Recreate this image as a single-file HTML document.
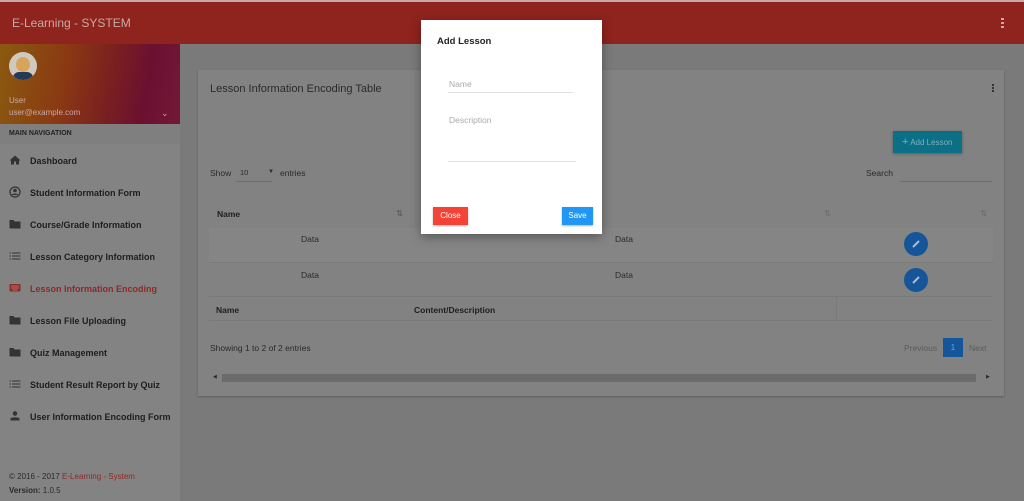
<!DOCTYPE html>
<html><head><meta charset="utf-8"><style>
*{margin:0;padding:0;box-sizing:border-box}
body{width:1024px;height:501px;overflow:hidden;background:#7a7a7a;font-family:"Liberation Sans",Arial,sans-serif;position:relative}
.a{position:absolute}
.hdr{left:0;top:0;width:1024px;height:44px;background:#8f231d;border-top:2px solid #c9a9a7}
.side{left:0;top:44px;width:180px;height:457px;background:#838383}
.nav{left:0;width:180px;font-size:9px;font-weight:bold;color:#1e1e1e}
.nav span{position:absolute;left:30px;top:0;white-space:nowrap}
.ic{position:absolute;left:9px;top:-1px;width:12px;height:10px}
.card{left:198px;top:70px;width:806px;height:326px;background:#828282;box-shadow:0 1px 2px rgba(0,0,0,.25)}
.t{font-size:8.5px;color:#2a2a2a}
.b{font-weight:bold;color:#1e1e1e}
.fab{width:24px;height:24px;border-radius:50%;background:#15559a}
</style></head><body>
<div class="a hdr"></div>
<div class="a" style="left:12px;top:16px;color:#c8a9a5;font-size:12px">E-Learning - SYSTEM</div>
<div class="a" style="left:1001px;top:18px;width:3px;height:10px;background:repeating-linear-gradient(#c8a9a5 0 2px,transparent 2px 4px)"></div>

<div class="a side"></div>
<div class="a" style="left:0;top:44px;width:180px;height:80px;background:linear-gradient(100deg,#8a5a10 0%,#8a3a12 35%,#7a2020 60%,#6a1030 80%,#751838 100%)"></div>
<div class="a" style="left:9px;top:52px;width:28px;height:28px;border-radius:50%;background:#cfc9c0;overflow:hidden"><div style="position:absolute;left:7px;top:5px;width:14px;height:15px;border-radius:50%;background:#d7a45a"></div><div style="position:absolute;left:4px;top:20px;width:20px;height:10px;background:#233a5a;border-radius:6px 6px 0 0"></div></div>
<div class="a" style="left:9px;top:96px;font-size:8px;color:#c9a9a9">User</div>
<div class="a" style="left:9px;top:108px;font-size:8px;color:#c9a9a9">user@example.com</div>
<div class="a" style="left:161px;top:108px;font-size:9px;color:#c9a9a9">&#8964;</div>
<div class="a" style="left:0;top:124px;width:180px;height:20px;background:#7f7f7f"></div>
<div class="a" style="left:9px;top:130px;font-size:7px;font-weight:bold;color:#222">MAIN NAVIGATION</div>

<div class="a nav" style="top:156px"><svg class="ic" viewBox="0 0 24 20"><path d="M12 1L1 11h3v8h6v-6h4v6h6v-8h3z" fill="#333"/></svg><span>Dashboard</span></div>
<div class="a nav" style="top:188px"><svg class="ic" viewBox="0 0 24 24" style="height:12px;top:-2px"><circle cx="12" cy="12" r="10" fill="none" stroke="#333" stroke-width="2.5"/><circle cx="12" cy="9" r="3.5" fill="#333"/><path d="M5 18c3-4 11-4 14 0" fill="#333"/></svg><span>Student Information Form</span></div>
<div class="a nav" style="top:220px"><svg class="ic" viewBox="0 0 24 20"><path d="M1 2h8l2 3h12v14H1z" fill="#333"/></svg><span>Course/Grade Information</span></div>
<div class="a nav" style="top:252px"><svg class="ic" viewBox="0 0 24 20"><path d="M1 3h3v2H1zm5 0h17v2H6zM1 9h3v2H1zm5 0h17v2H6zM1 15h3v2H1zm5 0h17v2H6z" fill="#333"/></svg><span>Lesson Category Information</span></div>
<div class="a nav" style="top:284px;color:#8e2a26"><svg class="ic" viewBox="0 0 24 20"><rect x="1" y="2" width="22" height="15" rx="2" fill="#8e2a26"/><path d="M4 6h16M4 10h16M7 14h10" stroke="#c08a88" stroke-width="1.5"/></svg><span>Lesson Information Encoding</span></div>
<div class="a nav" style="top:316px"><svg class="ic" viewBox="0 0 24 20"><path d="M1 2h8l2 3h12v14H1z" fill="#333"/></svg><span>Lesson File Uploading</span></div>
<div class="a nav" style="top:348px"><svg class="ic" viewBox="0 0 24 20"><path d="M1 2h8l2 3h12v14H1z" fill="#333"/></svg><span>Quiz Management</span></div>
<div class="a nav" style="top:380px"><svg class="ic" viewBox="0 0 24 20"><path d="M1 3h3v2H1zm5 0h17v2H6zM1 9h3v2H1zm5 0h17v2H6zM1 15h3v2H1zm5 0h17v2H6z" fill="#333"/></svg><span>Student Result Report by Quiz</span></div>
<div class="a nav" style="top:412px"><svg class="ic" viewBox="0 0 24 20"><circle cx="12" cy="5" r="4.5" fill="#333"/><path d="M3 19v-4c0-3 18-3 18 0v4z" fill="#333"/></svg><span>User Information Encoding Form</span></div>
<div class="a" style="left:9px;top:472px;font-size:8px;color:#2a2a2a">© 2016 - 2017 <span style="color:#8e2a26">E-Learning - System</span></div>
<div class="a" style="left:9px;top:486px;font-size:8px;color:#2a2a2a"><b>Version:</b> 1.0.5</div>

<div class="a card"></div>
<div class="a t" style="left:210px;top:83px;font-size:11px">Lesson Information Encoding Table</div>
<div class="a" style="left:992px;top:84px;width:2px;height:8px;background:repeating-linear-gradient(#333 0 2px,transparent 2px 3px)"></div>
<div class="a" style="left:893px;top:131px;width:69px;height:22px;background:#0b6f86;box-shadow:0 1px 3px rgba(0,0,0,.3);color:#7fb0bd;font-size:8px;line-height:22px;padding-left:9px;white-space:nowrap"><span style="font-size:11px">+</span> Add Lesson</div>
<div class="a t" style="left:210px;top:168px">Show</div>
<div class="a t" style="left:240px;top:168px;font-size:7.5px">10</div>
<div class="a" style="left:236px;top:181px;width:36px;height:1px;background:#6e6e6e"></div>
<div class="a t" style="left:268px;top:169px;font-size:6px">▼</div>
<div class="a t" style="left:280px;top:168px">entries</div>
<div class="a t" style="left:866px;top:168px">Search</div>
<div class="a" style="left:900px;top:181px;width:92px;height:1px;background:#6e6e6e"></div>

<div class="a" style="left:209px;top:228px;width:784px;height:34px;background:#858585"></div>
<div class="a" style="left:209px;top:262px;width:784px;height:1px;background:#7a7a7a"></div>
<div class="a" style="left:209px;top:296px;width:784px;height:1px;background:#7a7a7a"></div>
<div class="a" style="left:209px;top:320px;width:784px;height:1px;background:#7a7a7a"></div>
<div class="a" style="left:836px;top:296px;width:1px;height:24px;background:#7a7a7a"></div>
<div class="a t b" style="left:217px;top:209px">Name</div>
<div class="a t" style="left:396px;top:208px;color:#555">⇅</div>
<div class="a t" style="left:824px;top:208px;color:#6a6a6a">⇅</div>
<div class="a t" style="left:980px;top:208px;color:#6a6a6a">⇅</div>
<div class="a t" style="left:301px;top:234px">Data</div>
<div class="a t" style="left:615px;top:234px">Data</div>
<div class="a t" style="left:301px;top:270px">Data</div>
<div class="a t" style="left:615px;top:270px">Data</div>
<div class="a fab" style="left:904px;top:232px"><svg viewBox="0 0 24 24" width="24" height="24"><path d="M9 15l6-6" stroke="#a9bcd4" stroke-width="2"/></svg></div>
<div class="a fab" style="left:904px;top:268px"><svg viewBox="0 0 24 24" width="24" height="24"><path d="M9 15l6-6" stroke="#a9bcd4" stroke-width="2"/></svg></div>
<div class="a t b" style="left:216px;top:305px">Name</div>
<div class="a t b" style="left:414px;top:305px">Content/Description</div>
<div class="a t" style="left:210px;top:343px">Showing 1 to 2 of 2 entries</div>
<div class="a t" style="left:904px;top:343px;color:#5a5a5a">Previous</div>
<div class="a" style="left:943px;top:338px;width:20px;height:19px;background:#15559a;color:#7f9fc4;font-size:8px;text-align:center;line-height:19px">1</div>
<div class="a t" style="left:969px;top:343px;color:#5a5a5a">Next</div>
<div class="a" style="left:222px;top:374px;width:754px;height:8px;background:#6b6b6b"></div>
<div class="a t" style="left:213px;top:374px;font-size:5px">◀</div>
<div class="a t" style="left:986px;top:374px;font-size:5px">▶</div>

<div class="a" style="left:421px;top:20px;width:181px;height:214px;background:#fff;box-shadow:0 3px 10px rgba(0,0,0,.35)"></div>
<div class="a" style="left:437px;top:36px;font-size:9.5px;font-weight:bold;color:#222">Add Lesson</div>
<div class="a" style="left:449px;top:79px;font-size:8.5px;color:#aaa">Name</div>
<div class="a" style="left:448px;top:92px;width:125px;height:1px;background:#e0e0e0"></div>
<div class="a" style="left:449px;top:115px;font-size:8.5px;color:#aaa">Description</div>
<div class="a" style="left:448px;top:161px;width:128px;height:1px;background:#e0e0e0"></div>
<div class="a" style="left:433px;top:207px;width:35px;height:18px;background:#f44336;color:#fff;font-size:8px;line-height:18px;text-align:center;box-shadow:0 1px 2px rgba(0,0,0,.3)">Close</div>
<div class="a" style="left:562px;top:207px;width:31px;height:18px;background:#2196f3;color:#fff;font-size:8px;line-height:18px;text-align:center;box-shadow:0 1px 2px rgba(0,0,0,.3)">Save</div>
</body></html>
